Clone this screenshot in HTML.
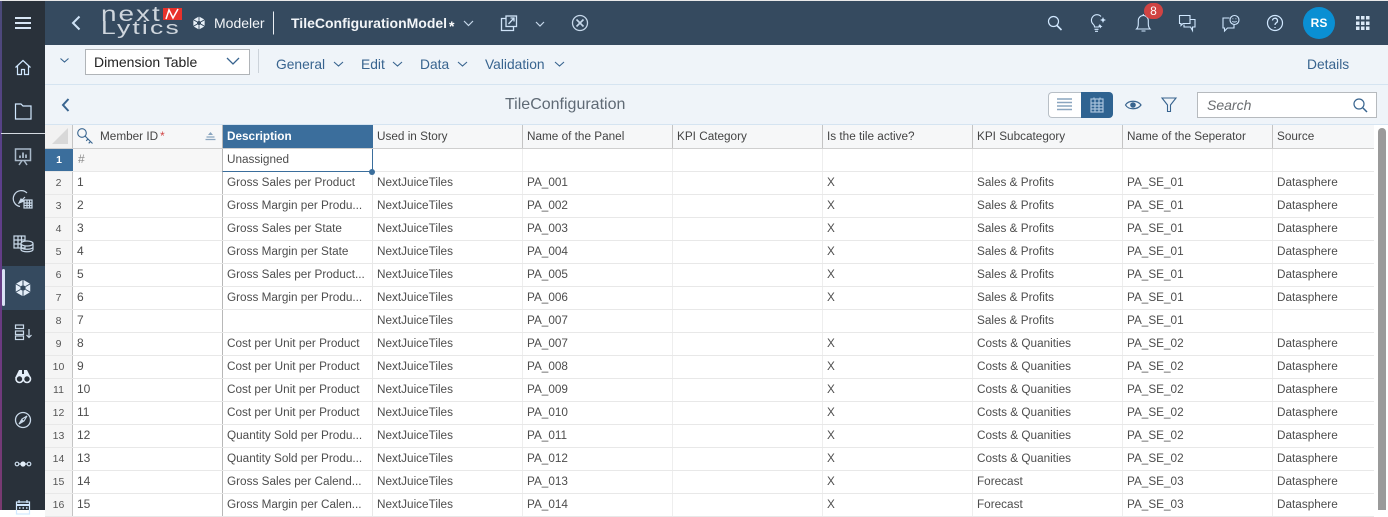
<!DOCTYPE html>
<html><head><meta charset="utf-8">
<style>
*{box-sizing:border-box}
html,body{margin:0;padding:0;width:1388px;height:510px;overflow:hidden;background:#fff;font-family:"Liberation Sans",sans-serif}
.a{position:absolute}
svg{position:absolute;overflow:visible;fill:none}
.t{position:absolute;white-space:nowrap}
.r{position:absolute;left:45px;height:23px;width:1329px;display:flex;border-bottom:1px solid #e8e8e8;font-size:11.75px;line-height:21px;color:#4d4d4d}
.r div{flex:none;width:150px;padding-left:4px;border-right:1px solid #eee;white-space:nowrap;overflow:hidden;height:22px}
.r .n{width:28px;padding:1px 0 0;text-align:center;font-size:10.5px;background:#f5f5f5;border-right:1px solid #c4c4c4;color:#555}
.r .m{width:150px;border-right:1px solid #b8b8b8;font-size:12px}
.r .d{border-right:1px solid #e8e8e8}
.r .s{width:101px;border-right:0}
.h{top:125px;height:24px;background:#f6f7f8;border-bottom:1px solid #cfcfcf;line-height:23px}
.h div{height:23px;border-right:1px solid #c4c4c4;background:#f6f7f8;color:#444}
.nav{font-size:13.8px;line-height:18px;color:#38648f}
</style></head><body>
<!-- Shell -->
<div class="a" style="left:0;top:0;width:1388px;height:45px;background:#354a5f"></div>
<div class="a" style="left:0;top:0;width:1388px;height:1px;background:#e9e9e9"></div>
<div class="a" style="left:0;top:1px;width:45px;height:509px;background:#29313a"></div>
<div class="a" style="left:0;top:1px;width:2px;height:509px;background:linear-gradient(#4a4a78,#5c3f8c 35%,#6d3a80 70%,#7a3a70)"></div>
<div class="a" style="left:1px;top:133px;width:44px;height:1px;background:#d5dbe2"></div>
<div class="a" style="left:2px;top:266px;width:43px;height:44px;background:#354a5f"></div>
<div class="a" style="left:2px;top:269px;width:3px;height:37px;background:#d9e2f5;border-radius:2px"></div>
<!-- Sidebar icons -->
<svg style="left:0;top:0" width="45" height="510" stroke="#d1e8ff" stroke-width="1.2">
<path d="M15 18h16M15 23h16M15 28h16" stroke-width="2" stroke="#d8e6f5"/>
<path d="M15.500 67.500l7.500-7 7.500 7M17.500 66v8.500h4v-5h3v5h4V66" />
<path d="M15.500 119h15.500v-13h-8l-2-2h-5.500z"/>
<g stroke="#a9b9c9" stroke-width="1.500"><rect x="15.500" y="149" width="15" height="11.500"/><path d="M19 165l3-4.500M27 165l-3-4.500"/><path d="M20 158v-2.500M23 158v-5.500M26 158v-3.500" stroke-width="1.800"/></g>
<g stroke="#c9d9e9"><path d="M27 193a8 8 0 1 0 -7 13.500M19 203l6-6" /><path d="M19 203l2-4 3 2z" fill="#c9d9e9"/><rect x="24" y="200" width="8" height="8"/><path d="M24 203h8M24 205.500h8M27 200v8M29.500 200v8"/></g>
<g stroke="#c9d9e9"><rect x="14" y="236" width="11" height="12"/><path d="M14 240h11M14 244h11M18 236v12M21.500 236v12"/><ellipse cx="27" cy="243.500" rx="6" ry="2.500" fill="#29313a"/><path d="M21 243.500v6c0 3 12 3 12 0v-6M21 247c0 3 12 3 12 0"/></g>
<g transform="translate(23,288)" stroke="none"><path d="M0-7.500 6.500-3.700V3.700L0 7.500-6.500 3.700V-3.700z" fill="#e4eef9" stroke="#e4eef9" stroke-width="1.500" stroke-linejoin="round"/><g stroke="#354a5f" stroke-width="1"><path d="M0-9V-3M7.800-4.500 2.600-1.500M7.800 4.500 2.600 1.500M0 9V3M-7.800 4.500-2.600 1.500M-7.800-4.500-2.600-1.500"/></g><path d="M0-3 2.600-1.500V1.500L0 3-2.600 1.500V-1.500z" fill="#354a5f"/></g>
<g stroke="#c9d9e9"><rect x="15.500" y="325" width="8" height="3.500"/><rect x="15.500" y="331" width="8" height="3.500"/><rect x="15.500" y="336" width="8" height="3.500"/><path d="M29 329v8M26.500 335l2.500 2.500 2.500-2.500"/></g>
<g fill="#e4eef9" stroke="none"><path d="M15 378l4-8h3v4h2v-4h3l4 8z"/></g>
<circle cx="19.500" cy="379" r="3.500" fill="#29313a" stroke="#e4eef9" stroke-width="1.600"/><circle cx="27" cy="379" r="3.500" fill="#29313a" stroke="#e4eef9" stroke-width="1.600"/>
<circle cx="23" cy="420" r="7.500" stroke-width="1.300" stroke="#c9d9e9"/><path d="M19 424l3-5 5-3-3 5z" fill="#29313a" stroke="#c9d9e9"/><path d="M19 424l5-3-2-2z" fill="#c9d9e9" stroke="none"/>
<g stroke="#c9d9e9"><circle cx="17" cy="464" r="1.800"/><circle cx="29" cy="464" r="1.800"/><path d="M19 464h2M25 464h2"/></g><circle cx="23" cy="464" r="2.600" fill="#e4eef9" stroke="none"/>
<g stroke="#d1e8ff"><rect x="16.500" y="502" width="13" height="12"/><path d="M16.500 505h13" stroke-width="2"/><path d="M19 500v3M27 500v3" /><path d="M19 508h1.500M22.500 508h1.500M26 508h1.500" stroke-width="1.500"/></g>
</svg>
<!-- Shell top content -->
<svg style="left:0;top:0" width="1388" height="45" stroke="#d1e8ff" stroke-width="1.300">
<path d="M79.500 16.500l-6.500 6.500 6.500 6.500" stroke-width="2" stroke="#cfe3f7"/>
<path d="M273.500 11.500v23" stroke="#e9eef3" stroke-width="1"/>
<g transform="translate(199,23)" stroke="none"><path d="M0-5.800 5-2.900V2.900L0 5.800-5 2.900V-2.900z" fill="#e8f0f8" stroke="#e8f0f8" stroke-width="1.300" stroke-linejoin="round"/><g stroke="#354a5f" stroke-width=".9"><path d="M0-7V-2.300M6-3.500 2-1.200M6 3.500 2 1.200M0 7V2.300M-6 3.500-2 1.200M-6-3.500-2-1.200"/></g><path d="M0-2.300 2-1.200V1.200L0 2.300-2 1.200V-1.200z" fill="#354a5f"/></g>
<path d="M464 21l4.500 4.500 4.500-4.500" stroke="#c6d8ea" stroke-width="1.200"/>
<rect x="506" y="16" width="10.500" height="10.500" stroke="#cfe3f7"/><path d="M506 18.500h-4.500V30.500h12v-4M508.500 24l5.500-6M510.500 18h3.500v3.500" stroke="#cfe3f7"/>
<path d="M536 22l4 4 4-4" stroke="#c6d8ea" stroke-width="1.200"/>
<circle cx="580" cy="23" r="7.500" stroke="#c6d8ea" stroke-width="1.300"/><path d="M576.500 19.500l7 7M583.500 19.500l-7 7" stroke="#c6d8ea" stroke-width="1.600"/>
<circle cx="1053.500" cy="21.500" r="5" stroke-width="1.200"/><path d="M1057 25.500l4.500 4.500" stroke-width="1.600"/>
<path d="M1101 16.500a5.500 5.500 0 1 0-7.500 8c.8.700 1 1.300 1 2.500h4.500c0-1 .2-1.700.8-2.400M1094.500 29.300h4M1095 31.300h3" stroke-width="1.100"/><path d="M1103 17l.9 2.100 2.100.9-2.100.9-.9 2.100-.9-2.100-2.100-.9 2.100-.9zM1100.500 24.500l.6 1.400 1.400.6-1.400.6-.6 1.400-.6-1.400-1.400-.6 1.400-.6z" fill="#d1e8ff" stroke="none"/>
<path d="M1136.500 29c2-2 1.800-4 1.800-8.500a5 5 0 0 1 10 0c0 4.500-.2 6.500 1.800 8.500zM1141.500 31h4" stroke-width="1.100"/><path d="M1143.300 15.500v-1.500" stroke-width="1.100"/>
<path d="M1179.500 15.500h10.500v8h-7l-2 2v-2h-1.500z" stroke-width="1.100"/><path d="M1184 24.500v2.500h6.500l2 3.500v-3.500h2.500v-7.500h-4.500" stroke-width="1.100"/>
<path d="M1229.500 18h-6.500v10h1.500v3l3-3h6.500v-3.500" stroke-width="1.100"/><circle cx="1234.500" cy="20" r="4.500" stroke-width="1.100"/><path d="M1232.300 21.300c1 1 3.400 1 4.400 0M1232.500 18.800h.8M1235.500 18.800h.8" stroke-width="1"/>
<circle cx="1275" cy="23" r="7.500" stroke-width="1.200"/><path d="M1272.500 20.500a2.500 2.500 0 1 1 3.500 2.500c-.8.500-1 1-1 2"/><path d="M1275 27v1"/>
<g fill="#dbe9f7" stroke="none"><rect x="1356" y="16" width="3.500" height="3.500"/><rect x="1361" y="16" width="3.500" height="3.500"/><rect x="1366" y="16" width="3.500" height="3.500"/><rect x="1356" y="21.500" width="3.500" height="3.500"/><rect x="1361" y="21.500" width="3.500" height="3.500"/><rect x="1366" y="21.500" width="3.500" height="3.500"/><rect x="1356" y="26.500" width="3.500" height="3.500"/><rect x="1361" y="26.500" width="3.500" height="3.500"/><rect x="1366" y="26.500" width="3.500" height="3.500"/></g>
</svg>
<!-- Logo -->
<div class="t" style="left:101px;top:5px;font-size:21px;line-height:20px;letter-spacing:1.5px;color:#cfd6dd;transform:scaleX(1.33);transform-origin:left">next</div>
<div class="t" style="left:101px;top:18px;font-size:18px;line-height:20px;letter-spacing:1.5px;color:#cfd6dd;transform:scaleX(1.47);transform-origin:left">Lytics</div>
<div class="a" style="left:163px;top:8px;width:19px;height:12px;background:#e8322c"></div>
<svg style="left:163px;top:8px" width="19" height="12" stroke="#fff" stroke-width="1.500"><path d="M3 11l3-9 4 8 5-9"/></svg>
<div class="t" style="left:214px;top:14px;font-size:14px;line-height:18px;color:#f2f5f8">Modeler</div>
<div class="t" style="left:291px;top:14px;font-size:14px;line-height:18px;font-weight:700;color:#f2f5f8">TileConfigurationModel</div>
<div class="t" style="left:449px;top:17px;font-size:14px;font-weight:700;line-height:18px;color:#fff">*</div>
<div class="a" style="left:1144px;top:3px;width:19px;height:16px;border-radius:8px;background:#d04343;color:#fff;font-size:12px;line-height:16px;text-align:center">8</div>
<div class="a" style="left:1303px;top:7px;width:32px;height:32px;border-radius:50%;background:#0a8fd3;color:#fff;font-size:12px;font-weight:700;line-height:32px;text-align:center">RS</div>
<!-- Toolbar -->
<div class="a" style="left:45px;top:45px;width:1343px;height:80px;background:#eff4f9"></div>
<div class="a" style="left:45px;top:84px;width:1343px;height:1px;background:#d5e4f1"></div>
<div class="a" style="left:45px;top:124px;width:1343px;height:1px;background:#d5e4f1"></div>
<div class="a" style="left:85px;top:49px;width:165px;height:26px;background:#fff;border:1px solid #b0b4b8"></div>
<div class="t" style="left:94px;top:53px;font-size:14px;line-height:18px;color:#222">Dimension Table</div>
<div class="a" style="left:258px;top:49px;width:1px;height:24px;background:#ccd3da"></div>
<div class="t nav" style="left:276px;top:56px">General</div>
<div class="t nav" style="left:361px;top:56px">Edit</div>
<div class="t nav" style="left:420px;top:56px">Data</div>
<div class="t nav" style="left:485px;top:56px">Validation</div>
<div class="t nav" style="left:1307px;top:56px">Details</div>
<div class="t" style="left:505px;top:95px;font-size:16px;line-height:20px;color:#5f6a75">TileConfiguration</div>
<svg style="left:0;top:0" width="1388" height="125" stroke="#38648f" stroke-width="1.100">
<path d="M60.500 58.500l4 3.500 4-3.500M334 62l4.500 4 4.500-4M393 62l4.500 4 4.500-4M458 62l4.500 4 4.500-4M555 62l4.500 4 4.500-4"/>
<path d="M227 58l6 6 6-6" stroke-width="1.300"/>
<path d="M68.500 99l-5.500 6 5.500 6" stroke-width="2"/>
</svg>
<div class="a" style="left:1048px;top:92px;width:34px;height:26px;background:#fff;border:1px solid #b8bfc6;border-right:0;border-radius:4px 0 0 4px"></div>
<div class="a" style="left:1081px;top:92px;width:32px;height:26px;background:#2f6391;border-radius:0 4px 4px 0"></div>
<div class="a" style="left:1197px;top:92px;width:180px;height:26px;background:#fff;border:1px solid #b6babe"></div>
<div class="t" style="left:1207px;top:96px;font-size:14px;line-height:18px;font-style:italic;color:#6a6d70">Search</div>
<svg style="left:0;top:0" width="1388" height="125" stroke="#38648f" stroke-width="1.200">
<path d="M1057 99h15M1057 102.500h15M1057 106h15M1057 109.500h15" stroke="#8aa5bf" stroke-width="1.400"/>
<g stroke="#a9c3dc"><rect x="1091" y="99" width="12" height="13"/><path d="M1091 103h12M1091 106h12M1091 109h12M1095 99v13M1099 99v13M1094 97.500v2M1100 97.500v2"/></g>
<path d="M1125.500 105c3-5 12-5 15.500 0-3.500 5-12.500 5-15.500 0z"/><circle cx="1133" cy="105" r="2.800" fill="#38648f" stroke="none"/>
<path d="M1162 98h14l-5.500 7v6.500l-3 0v-6.500z" stroke-width="1.100"/>
<circle cx="1359" cy="104" r="5" /><path d="M1363 108l4 4" stroke-width="1.500"/>
</svg>
<!-- Grid -->
<div class="r h">
<div class="n" style="background:#f2f2f2"></div>
<div class="m" style="padding-left:27px;font-size:11.75px">Member ID<span style="color:#d04343;margin-left:2px">*</span></div>
<div class="d" style="background:#3b6e9c;color:#fff;font-weight:700;border-right:1px solid #3b6e9c">Description</div>
<div>Used in Story</div><div>Name of the Panel</div><div>KPI Category</div><div>Is the tile active?</div><div>KPI Subcategory</div><div>Name of the Seperator</div><div class="s">Source</div>
</div>
<svg style="left:0;top:0;z-index:2" width="1388" height="150">
<path d="M52 144h16v-16z" fill="#d8d8d8"/>
<g stroke="#38648f" stroke-width="1.100"><circle cx="82" cy="133" r="4.300"/><path d="M85 136l7.500 7.500M90.500 141.500l-1.800 1.800M88 139l-1.800 1.800"/></g>
<path d="M210.500 132l2.500 3h-5z" fill="#8aa5bf"/><path d="M206.500 137h8M205.500 139.500h10" stroke="#8aa5bf" stroke-width="1.200"/>
</svg>
<div class="r" style="top:149px;height:23px"><div class="n" style="background:#3b6e9c;color:#fff;font-weight:700;border-right:0">1</div><div class="m" style="background:#f7f7f7;color:#888;padding-left:5px">#</div><div class="d">Unassigned</div><div></div><div></div><div></div><div></div><div></div><div></div><div class="s"></div></div>
<div class="r" style="top:172px"><div class="n">2</div><div class="m">1</div><div class="d">Gross Sales per Product</div><div>NextJuiceTiles</div><div>PA_001</div><div></div><div>X</div><div>Sales &amp; Profits</div><div>PA_SE_01</div><div class="s">Datasphere</div></div>
<div class="r" style="top:195px"><div class="n">3</div><div class="m">2</div><div class="d">Gross Margin per Produ...</div><div>NextJuiceTiles</div><div>PA_002</div><div></div><div>X</div><div>Sales &amp; Profits</div><div>PA_SE_01</div><div class="s">Datasphere</div></div>
<div class="r" style="top:218px"><div class="n">4</div><div class="m">3</div><div class="d">Gross Sales per State</div><div>NextJuiceTiles</div><div>PA_003</div><div></div><div>X</div><div>Sales &amp; Profits</div><div>PA_SE_01</div><div class="s">Datasphere</div></div>
<div class="r" style="top:241px"><div class="n">5</div><div class="m">4</div><div class="d">Gross Margin per State</div><div>NextJuiceTiles</div><div>PA_004</div><div></div><div>X</div><div>Sales &amp; Profits</div><div>PA_SE_01</div><div class="s">Datasphere</div></div>
<div class="r" style="top:264px"><div class="n">6</div><div class="m">5</div><div class="d">Gross Sales per Product...</div><div>NextJuiceTiles</div><div>PA_005</div><div></div><div>X</div><div>Sales &amp; Profits</div><div>PA_SE_01</div><div class="s">Datasphere</div></div>
<div class="r" style="top:287px"><div class="n">7</div><div class="m">6</div><div class="d">Gross Margin per Produ...</div><div>NextJuiceTiles</div><div>PA_006</div><div></div><div>X</div><div>Sales &amp; Profits</div><div>PA_SE_01</div><div class="s">Datasphere</div></div>
<div class="r" style="top:310px"><div class="n">8</div><div class="m">7</div><div class="d"></div><div>NextJuiceTiles</div><div>PA_007</div><div></div><div></div><div>Sales &amp; Profits</div><div>PA_SE_01</div><div class="s"></div></div>
<div class="r" style="top:333px"><div class="n">9</div><div class="m">8</div><div class="d">Cost per Unit per Product</div><div>NextJuiceTiles</div><div>PA_007</div><div></div><div>X</div><div>Costs &amp; Quanities</div><div>PA_SE_02</div><div class="s">Datasphere</div></div>
<div class="r" style="top:356px"><div class="n">10</div><div class="m">9</div><div class="d">Cost per Unit per Product</div><div>NextJuiceTiles</div><div>PA_008</div><div></div><div>X</div><div>Costs &amp; Quanities</div><div>PA_SE_02</div><div class="s">Datasphere</div></div>
<div class="r" style="top:379px"><div class="n">11</div><div class="m">10</div><div class="d">Cost per Unit per Product</div><div>NextJuiceTiles</div><div>PA_009</div><div></div><div>X</div><div>Costs &amp; Quanities</div><div>PA_SE_02</div><div class="s">Datasphere</div></div>
<div class="r" style="top:402px"><div class="n">12</div><div class="m">11</div><div class="d">Cost per Unit per Product</div><div>NextJuiceTiles</div><div>PA_010</div><div></div><div>X</div><div>Costs &amp; Quanities</div><div>PA_SE_02</div><div class="s">Datasphere</div></div>
<div class="r" style="top:425px"><div class="n">13</div><div class="m">12</div><div class="d">Quantity Sold per Produ...</div><div>NextJuiceTiles</div><div>PA_011</div><div></div><div>X</div><div>Costs &amp; Quanities</div><div>PA_SE_02</div><div class="s">Datasphere</div></div>
<div class="r" style="top:448px"><div class="n">14</div><div class="m">13</div><div class="d">Quantity Sold per Produ...</div><div>NextJuiceTiles</div><div>PA_012</div><div></div><div>X</div><div>Costs &amp; Quanities</div><div>PA_SE_02</div><div class="s">Datasphere</div></div>
<div class="r" style="top:471px"><div class="n">15</div><div class="m">14</div><div class="d">Gross Sales per Calend...</div><div>NextJuiceTiles</div><div>PA_013</div><div></div><div>X</div><div>Forecast</div><div>PA_SE_03</div><div class="s">Datasphere</div></div>
<div class="r" style="top:494px"><div class="n">16</div><div class="m">15</div><div class="d">Gross Margin per Calen...</div><div>NextJuiceTiles</div><div>PA_014</div><div></div><div>X</div><div>Forecast</div><div>PA_SE_03</div><div class="s">Datasphere</div></div>
<!-- Selection -->
<div class="a" style="left:222px;top:149px;width:151px;height:23px;border:1px solid #3b6e9c;border-top:0;border-left:1px solid #b8b8b8"></div>
<div class="a" style="left:369px;top:169px;width:6px;height:6px;border-radius:50%;background:#3b6e9c"></div>
<!-- Scrollbar -->
<div class="a" style="left:1378px;top:128px;width:8px;height:382px;background:#9a9a9a;border-radius:4px 4px 0 0"></div>
</body></html>
